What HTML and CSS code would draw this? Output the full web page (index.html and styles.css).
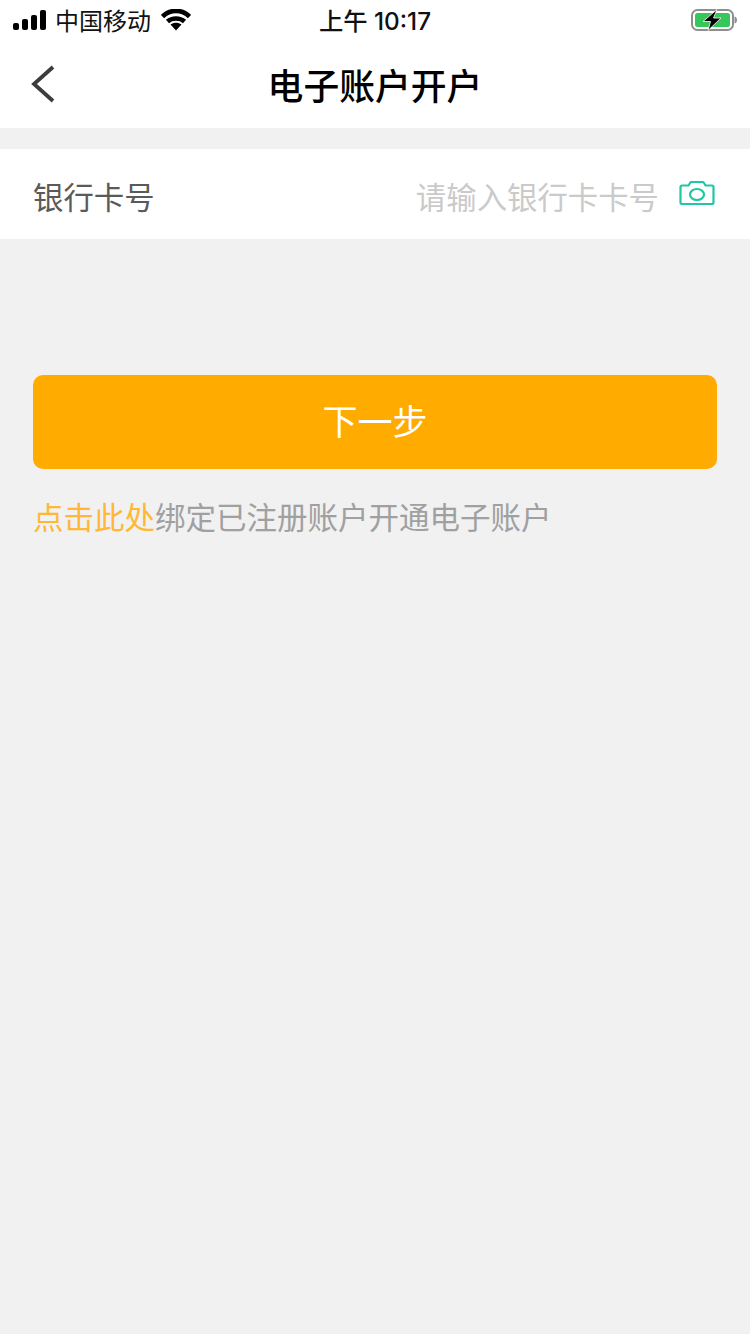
FILE: index.html

```html
<!DOCTYPE html>
<html lang="zh-CN">
<head>
  <meta charset="UTF-8" />
  <meta name="viewport" content="width=device-width, initial-scale=1.0"/>
  <title>电子账户开户</title>
  <link rel="stylesheet" href="styles.css">
</head>
<body>
  <div class="statusbar">
    <div class="status-left">
      <svg class="signal" width="34" height="20" viewBox="0 0 34 20">
        <rect x="0" y="13" width="6" height="7" rx="2" fill="#000"/>
        <rect x="9" y="9" width="6" height="11" rx="2" fill="#000"/>
        <rect x="18" y="5" width="6" height="15" rx="2" fill="#000"/>
        <rect x="27" y="0" width="6" height="20" rx="2" fill="#000"/>
      </svg>
      <span class="carrier">中国移动</span>
      <svg class="wifi" width="30" height="22" viewBox="0 0 30 22">
        <path d="M1.5 7.5 C9 0 21 0 28.5 7.5" fill="none" stroke="#000" stroke-width="4.6"/>
        <path d="M6.5 12.5 C11 8.5 19 8.5 23.5 12.5" fill="none" stroke="#000" stroke-width="4.6"/>
        <path d="M9.5 15.5 C13 13 17 13 20.5 15.5 L15 21.5 Z" fill="#000"/>
      </svg>
    </div>
    <div class="status-time">上午 10:17</div>
    <svg class="battery" width="46" height="24" viewBox="0 0 46 24">
      <rect x="1" y="2" width="41" height="20" rx="5.5" fill="none" stroke="#8f8f8f" stroke-width="2"/>
      <rect x="4" y="5" width="35" height="14" rx="2.5" fill="#34c759"/>
      <path d="M43.5 8.5 C45.5 9 46 10.5 46 12 C46 13.5 45.5 15 43.5 15.5 Z" fill="#8f8f8f"/>
      <path d="M26 1.5 L12 13.5 L19.5 13.5 L17 22.5 L30 10 L22.5 10 Z" fill="#000" stroke="#fff" stroke-width="0.8"/>
    </svg>
  </div>

  <div class="navbar">
    <svg class="back" width="26" height="38" viewBox="0 0 26 38">
      <path d="M23 2 L4 19 L23 36" fill="none" stroke="#3c3c3c" stroke-width="3.8"/>
    </svg>
    <h1 class="nav-title">电子账户开户</h1>
  </div>

  <div class="form-row">
    <span class="form-label">银行卡号</span>
    <span class="form-placeholder">请输入银行卡卡号</span>
    <svg class="camera" width="36" height="24" viewBox="0 0 36 24">
      <path d="M1.5 6 C1.5 5 2.1 4.5 3 4.5 L9.5 4.5 L11 2 C11.3 1.4 11.8 1 12.5 1 L23.5 1 C24.2 1 24.7 1.4 25 2 L26.5 4.5 L33 4.5 C33.9 4.5 34.5 5 34.5 6 L34.5 21.5 C34.5 22.5 33.9 23 33 23 L3 23 C2.1 23 1.5 22.5 1.5 21.5 Z" fill="none" stroke="#1fc7a4" stroke-width="2.2"/>
      <ellipse cx="18" cy="13.5" rx="7" ry="5.5" fill="none" stroke="#1fc7a4" stroke-width="2.2"/>
    </svg>
  </div>

  <div class="content">
    <button class="next-btn" type="button">下一步</button>
    <p class="bind-tip"><span class="bind-link">点击此处</span>绑定已注册账户开通电子账户</p>
  </div>
</body>
</html>
```

FILE: styles.css

```css
html, body {
  margin: 0;
  height: 100%;
}
body {
  width: 750px;
  min-height: 1334px;
  background: #f1f1f2;
  color: #000;
  font-family: "Noto Sans CJK SC", "Liberation Sans", sans-serif;
}
.statusbar {
  height: 40px;
  background: #fff;
  display: flex;
  align-items: center;
  justify-content: space-between;
  padding: 0 13px;
  box-sizing: border-box;
  position: relative;
}
.status-left {
  display: flex;
  align-items: center;
}
.signal { margin-right: 8px; }
.carrier {
  font-size: 24px;
  line-height: 40px;
  color: #111;
}
.wifi { margin-left: 10px; }
.status-time {
  position: absolute;
  left: 0;
  right: 0;
  top: 1px;
  text-align: center;
  font-family: Inter, "Noto Sans CJK SC", sans-serif;
  font-size: 24.3px;
  font-weight: 500;
  line-height: 40px;
  color: #111;
}
.navbar {
  height: 88px;
  background: #fff;
  display: flex;
  align-items: center;
  justify-content: center;
  position: relative;
}
.back {
  position: absolute;
  left: 30px;
  top: 25px;
}
.nav-title {
  margin: 0;
  font-size: 35.8px;
  font-weight: 500;
  line-height: 88px;
  color: #000;
}
.form-row {
  margin-top: 21px;
  height: 90px;
  background: #fff;
  display: flex;
  align-items: center;
  padding: 0 35px 0 33px;
}
.form-label {
  padding-top: 4px;
  font-size: 30.4px;
  color: #5a5a5a;
}
.form-placeholder {
  margin-left: auto;
  padding-top: 4px;
  font-size: 30.4px;
  color: #cacaca;
}
.camera { margin: 0 0 2px 20px; }
.content { padding: 136px 33px 0; }
.next-btn {
  display: block;
  width: 100%;
  height: 94px;
  padding: 0 0 6px;
  background: #ffab00;
  border: none;
  border-radius: 10px;
  color: #fff;
  font-family: inherit;
  font-size: 35px;
}
.bind-tip {
  margin: 25px 0 0;
  font-size: 30.5px;
  line-height: 44px;
  color: #a0a0a0;
}
.bind-link { color: #ffb835; }
```
